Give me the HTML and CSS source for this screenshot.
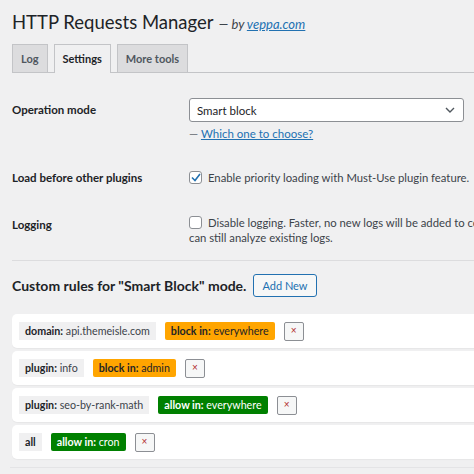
FILE: index.html
```html
<!DOCTYPE html>
<html lang="en">

<head>
    <meta charset="utf-8">
    <meta name="viewport" content="width=device-width, initial-scale=1.0">
    <title>HTTP Requests Manager</title>

    <link rel="stylesheet" href="styles.css">

</head>

<body>
    <div class="wrap">
        <h1 class="page_title">HTTP Requests Manager <span class="by">— by <a href="#">veppa.com</a></span></h1>

        <nav class="tabs">
            <a class="tab" href="#">Log</a>
            <a class="tab aktiv" href="#">Settings</a>
            <a class="tab" href="#">More tools</a>
        </nav>

        <div class="form_row row_mode">
            <div class="label">Operation mode</div>
            <div class="field">
                <div class="select">
                    <span>Smart block</span>
                    <svg width="10" height="6" viewBox="0 0 10 6"><path d="M1 1l4 4 4-4" fill="none" stroke="#50575e" stroke-width="1.4"/></svg>
                </div>
                <p class="hint">— <a href="#">Which one to choose?</a></p>
            </div>
        </div>

        <div class="form_row row_load">
            <div class="label">Load before other plugins</div>
            <div class="field">
                <label class="check"><span class="box checked"><svg width="10" height="9" viewBox="0 0 10 9"><path d="M1 4.5l3 3 5-6.5" fill="none" stroke="#2271b1" stroke-width="1.6"/></svg></span>Enable priority loading with Must-Use plugin feature.</label>
            </div>
        </div>

        <div class="form_row row_log">
            <div class="label">Logging</div>
            <div class="field">
                <label class="check"><span class="box"></span>Disable logging. Faster, no new logs will be added to collection. You</label>
                <span class="wrapline">can still analyze existing logs.</span>
            </div>
        </div>

        <hr>

        <div class="rules_head">
            <h2>Custom rules for "Smart Block" mode.</h2>
            <button class="btn">Add New</button>
        </div>

        <ul class="rules">
            <li class="rule">
                <span class="tag"><b>domain:</b> api.themeisle.com</span>
                <span class="tag block"><b>block in:</b> everywhere</span>
                <button class="del">×</button>
            </li>
            <li class="rule">
                <span class="tag"><b>plugin:</b> info</span>
                <span class="tag block"><b>block in:</b> admin</span>
                <button class="del">×</button>
            </li>
            <li class="rule">
                <span class="tag"><b>plugin:</b> seo-by-rank-math</span>
                <span class="tag allow"><b>allow in:</b> everywhere</span>
                <button class="del">×</button>
            </li>
            <li class="rule">
                <span class="tag"><b>all</b></span>
                <span class="tag allow"><b>allow in:</b> cron</span>
                <button class="del">×</button>
            </li>
        </ul>
    </div>
</body></html>
```

FILE: styles.css
```css
body {
    margin: 0;
    background-color: #f0f0f1;
    font-family: Lato, sans-serif;
    font-size: 11.5px;
    line-height: 15px;
    color: #1d2327;
    overflow: hidden;
}

a {
    color: #2271b1;
}

.wrap {
    padding: 9px 0 0 12px;
    width: 520px;
}

.page_title {
    margin: 0;
    font-size: 18.5px;
    font-weight: 400;
    line-height: 26px;
}

.by {
    font-size: 13px;
    font-style: italic;
    margin-left: 1px;
    color: #3c434a;
}

.tabs {
    display: flex;
    gap: 6px;
    margin-top: 7px;
    border-bottom: 1px solid #c3c4c7;
    height: 28px;
}

.tab {
    display: block;
    padding: 0 8px;
    line-height: 27px;
    font-size: 11px;
    background-color: #dcdcde;
    border: 1px solid #c3c4c7;
    border-bottom: none;
    color: #50575e;
    font-weight: 700;
    text-decoration: none;
}

.aktiv {
    background-color: #f0f0f1;
    color: #1d2327;
    height: 28px;
}

.form_row {
    display: flex;
}

.label {
    width: 177px;
    flex: none;
    font-weight: 700;
}

.row_mode {
    margin-top: 25px;
}

.row_mode .label {
    line-height: 24px;
}

.select {
    width: 275px;
    height: 24px;
    box-sizing: border-box;
    background-color: #fff;
    border: 1px solid #8c8f94;
    border-radius: 3px;
    display: flex;
    align-items: center;
    justify-content: space-between;
    padding: 0 8px 0 7px;
    font-size: 11.5px;
}

.hint {
    margin: 4px 0 0;
    color: #646970;
}

.row_load {
    margin-top: 29px;
}

.row_log {
    margin-top: 30px;
}

.check {
    display: flex;
    align-items: center;
    gap: 6px;
    white-space: nowrap;
    color: #3c434a;
    font-size: 11.3px;
}

.wrapline {
    display: block;
    color: #3c434a;
    line-height: 16px;
    font-size: 11.3px;
}

.row_log .label {
    padding-top: 2px;
}

.box {
    width: 11px;
    height: 11px;
    border: 1px solid #8c8f94;
    border-radius: 3px;
    background-color: #fff;
    display: flex;
    align-items: center;
    justify-content: center;
}

hr {
    border: none;
    border-top: 1px solid #dcdcde;
    margin: 14px 0 0;
}

.rules_head {
    display: flex;
    align-items: center;
    gap: 7px;
    margin-top: 13px;
}

h2 {
    margin: 0;
    font-size: 14px;
    font-weight: 700;
}

.btn {
    font-family: inherit;
    font-size: 11px;
    color: #2271b1;
    background-color: #f6f7f7;
    border: 1px solid #2271b1;
    border-radius: 3px;
    height: 23px;
    padding: 0 8px;
}

.rules {
    list-style: none;
    margin: 16px 0 0 -2px;
    padding: 1px 0 8px 2px;
    border-bottom: 1px solid #e4e4e6;
    display: flex;
    flex-direction: column;
    gap: 3px;
}

.rule {
    background-color: #fff;
    border-radius: 5px;
    height: 34px;
    display: flex;
    align-items: center;
    gap: 9px;
    padding-left: 7px;
    box-shadow: 0 1px 1px rgba(0, 0, 0, 0.04);
}

.tag {
    background-color: #f0f0f1;
    padding: 0 6px;
    line-height: 18px;
    font-size: 10.7px;
    color: #3c434a;
}

.tag b {
    font-weight: 700;
    color: #1d2327;
}

.block {
    background-color: #ffa500;
    border-radius: 2px;
    color: #1d2327;
}

.allow {
    background-color: #008000;
    border-radius: 2px;
    color: #fff;
}

.allow b {
    color: #fff;
}

.del {
    width: 20px;
    height: 19px;
    padding: 0;
    border: 1px solid #8c8f94;
    border-radius: 2px;
    background-color: #f6f7f7;
    color: #b32d2e;
    font-size: 10px;
    line-height: 1;
}
```
